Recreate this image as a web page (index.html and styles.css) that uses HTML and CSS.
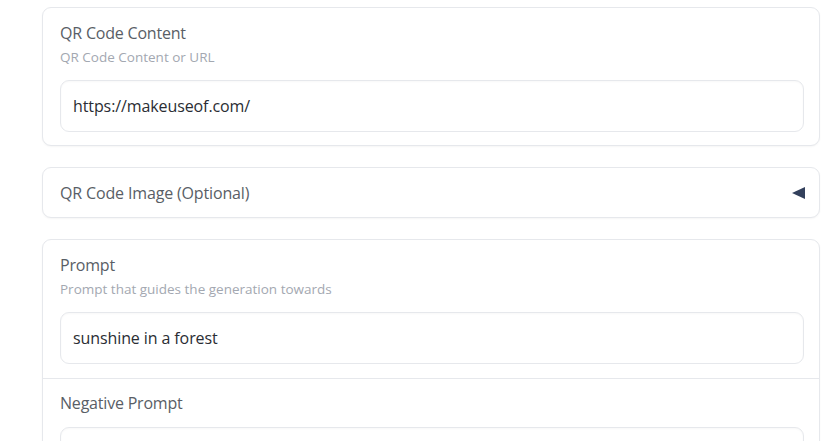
FILE: index.html
```html
<!DOCTYPE html>
<html lang="en">
<head>
<meta charset="utf-8">
<title>QR Code Generator</title>
<link rel="stylesheet" href="styles.css">
</head>
<body>
<div class="page">
  <div class="card">
    <div class="block">
      <div class="label">QR Code Content</div>
      <div class="info">QR Code Content or URL</div>
      <div class="input">https://makeuseof.com/</div>
    </div>
  </div>

  <div class="card accordion">
    <span class="acc-label">QR Code Image (Optional)</span>
    <svg class="acc-icon" width="13" height="12" viewBox="0 0 13 12"><path d="M0 6 L13 0 L13 12 Z" fill="#33405c"/></svg>
  </div>

  <div class="card form">
    <div class="block">
      <div class="label">Prompt</div>
      <div class="info">Prompt that guides the generation towards</div>
      <div class="input">sunshine in a forest</div>
    </div>
    <div class="block">
      <div class="label">Negative Prompt</div>
      <div class="input"></div>
    </div>
  </div>
</div>
</body>
</html>
```
FILE: styles.css
```css
* { box-sizing: border-box; }
html, body { margin: 0; padding: 0; background: #ffffff; }
body {
  font-family: "Open Sans", "Noto Sans", sans-serif;
  overflow: hidden;
  height: 441px;
}
.page {
  display: flex;
  flex-direction: column;
  gap: 21px;
  padding: 7px 5px 0 42px;
}
.card {
  border: 1px solid #e6e8ec;
  border-radius: 9px;
  background: #ffffff;
  box-shadow: 0 1px 2px rgba(0, 0, 0, 0.04);
}
.block {
  padding: 15px 15px 13px 17px;
}
.form .block + .block {
  border-top: 1px solid #e6e8ec;
  padding-top: 14px;
}
.form .block:first-child { padding-bottom: 14px; }
.label {
  font-size: 16px;
  line-height: 20px;
  color: #595e66;
  letter-spacing: -0.2px;
}
.info {
  font-size: 13.5px;
  line-height: 18px;
  margin-top: 5px;
  color: #a3a8b1;
  letter-spacing: 0;
}
.input {
  margin-top: 14px;
  height: 52px;
  border: 1px solid #e6e8ec;
  border-radius: 9px;
  background: #ffffff;
  box-shadow: inset 0 1px 2px rgba(0, 0, 0, 0.03);
  padding: 15px 12px;
  font-size: 16px;
  line-height: 20px;
  color: #2a2d33;
  letter-spacing: -0.1px;
}
.accordion {
  display: flex;
  align-items: center;
  justify-content: space-between;
  height: 51px;
  padding: 0 14px 0 17px;
}
.acc-label {
  font-size: 16px;
  line-height: 20px;
  color: #595e66;
  letter-spacing: -0.15px;
}
.acc-icon { display: block; }
```
